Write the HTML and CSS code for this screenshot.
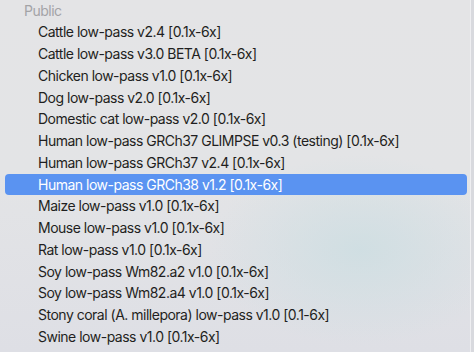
FILE: index.html
```html
<!DOCTYPE html>
<html>
<head>
<meta charset="utf-8">
<link rel="stylesheet" href="styles.css">
</head>
<body>
<div class="menu">
  <div class="header">Public</div>
  <ul class="items">
    <li class="item">Cattle low-pass v2.4 [0.1x-6x]</li>
    <li class="item">Cattle low-pass v3.0 BETA [0.1x-6x]</li>
    <li class="item">Chicken low-pass v1.0 [0.1x-6x]</li>
    <li class="item">Dog low-pass v2.0 [0.1x-6x]</li>
    <li class="item">Domestic cat low-pass v2.0 [0.1x-6x]</li>
    <li class="item">Human low-pass GRCh37 GLIMPSE v0.3 (testing) [0.1x-6x]</li>
    <li class="item">Human low-pass GRCh37 v2.4 [0.1x-6x]</li>
    <li class="item selected">Human low-pass GRCh38 v1.2 [0.1x-6x]</li>
    <li class="item">Maize low-pass v1.0 [0.1x-6x]</li>
    <li class="item">Mouse low-pass v1.0 [0.1x-6x]</li>
    <li class="item">Rat low-pass v1.0 [0.1x-6x]</li>
    <li class="item">Soy low-pass Wm82.a2 v1.0 [0.1x-6x]</li>
    <li class="item">Soy low-pass Wm82.a4 v1.0 [0.1x-6x]</li>
    <li class="item">Stony coral (A. millepora) low-pass v1.0 [0.1-6x]</li>
    <li class="item">Swine low-pass v1.0 [0.1x-6x]</li>
  </ul>
</div>
</body>
</html>
```
FILE: styles.css
```css
html, body {
  margin: 0;
  padding: 0;
  width: 474px;
  height: 352px;
  overflow: hidden;
  background: #d8d9de;
}
.menu {
  width: 471px;
  height: 352px;
  box-sizing: border-box;
  border-right: 1px solid #eeeef1;
  background:
    radial-gradient(ellipse 150px 95px at 360px 250px, rgba(206,222,226,0.9), rgba(206,222,226,0) 100%),
    linear-gradient(180deg, #e4e4e6 0%, #e3e4e6 50%, #dedfe5 100%);
  font-family: Inter, "Liberation Sans", sans-serif;
  font-size: 14px;
  letter-spacing: -0.5px;
  color: #1f1f21;
  padding: 0 3px 0 5px;
  overflow: hidden;
}
.header {
  height: 21.75px;
  line-height: 21.75px;
  margin-top: -0.5px;
  padding-left: 19px;
  color: #a3a3a6;
}
.items {
  list-style: none;
  margin: 0;
  padding: 0;
}
.item {
  height: 21.75px;
  line-height: 21.75px;
  padding-left: 33px;
  border-radius: 4px;
  white-space: nowrap;
}
.item.selected {
  background: #5a93f1;
  color: #ffffff;
}
```
